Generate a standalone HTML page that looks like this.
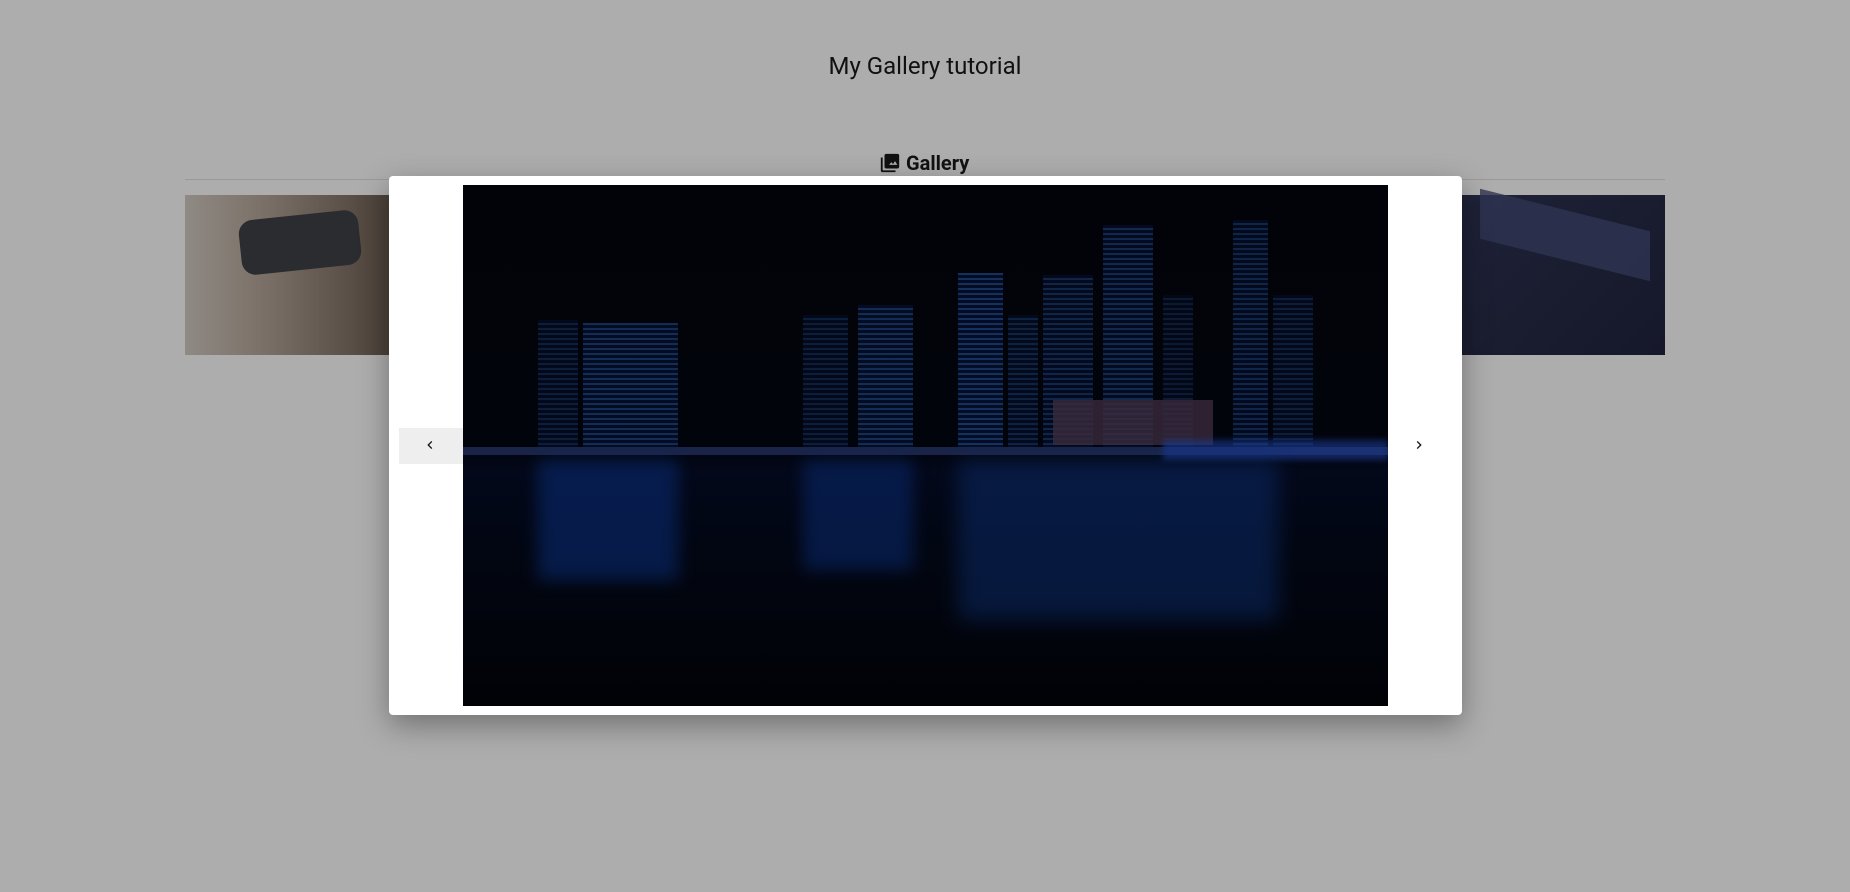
<!DOCTYPE html>
<html><head><style>
body{margin:0;width:1850px;height:892px;background:#adadad;font-family:Roboto,"Liberation Sans",sans-serif;position:relative;overflow:hidden}
.a{position:absolute}
.b{position:absolute;background:repeating-linear-gradient(0deg,rgba(60,140,255,.55) 0 2px,rgba(5,20,60,.9) 2px 5px)}
</style></head><body>
<div class="a" style="left:0;top:52px;width:1850px;text-align:center;font-size:24px;color:#111">My Gallery tutorial</div>
<div class="a" style="left:879px;top:152px;width:22px;height:22px">
<svg width="22" height="22" viewBox="0 0 24 24"><path d="M20 2H8a2 2 0 0 0-2 2v12a2 2 0 0 0 2 2h12a2 2 0 0 0 2-2V4a2 2 0 0 0-2-2zm-9 12 2.5-3 1.75 2.25L17.5 10 20 14H11zM2 6v14a2 2 0 0 0 2 2h14v-2H4V6H2z" fill="#111"/></svg></div>
<div class="a" style="left:906px;top:151px;font-size:20px;font-weight:bold;color:#111">Gallery</div>
<div class="a" style="left:185px;top:179px;width:1480px;height:1px;background:#999"></div>
<div class="a" style="left:185px;top:195px;width:204px;height:160px;background:linear-gradient(90deg,#8f8a84,#7a6f66 40%,#4a4038)"></div>
<div class="a" style="left:240px;top:215px;width:120px;height:55px;background:#2a2c30;border-radius:14px;transform:rotate(-6deg)"></div>
<div class="a" style="left:1462px;top:195px;width:203px;height:160px;background:linear-gradient(135deg,#1f2238,#1a1d30 50%,#15182a)"></div>
<div class="a" style="left:1480px;top:210px;width:170px;height:50px;background:#2e3552;transform:skewY(14deg);opacity:.8"></div>
<div class="a" style="left:389px;top:176px;width:1073px;height:539px;background:#fff;border-radius:4px;box-shadow:0 10px 30px rgba(0,0,0,.35)"></div>
<div class="a" style="left:399px;top:428px;width:64px;height:36px;background:#eee"></div>
<svg class="a" style="left:422px;top:437px" width="16" height="16" viewBox="0 0 24 24"><path d="M15.4 7.4 14 6l-6 6 6 6 1.4-1.4L10.8 12z" fill="#111"/></svg>
<svg class="a" style="left:1411px;top:437px" width="16" height="16" viewBox="0 0 24 24"><path d="M8.6 7.4 10 6l6 6-6 6-1.4-1.4L13.2 12z" fill="#111"/></svg>
<div class="a" style="left:463px;top:185px;width:925px;height:521px;background:linear-gradient(180deg,#020308 0%,#02040c 50%,#03081a 55%,#020612 70%,#010206 100%);overflow:hidden">
<div class="b" style="left:75px;top:135px;width:40px;height:130px;opacity:.35"></div>
<div class="b" style="left:120px;top:138px;width:95px;height:127px;opacity:.55"></div>
<div class="b" style="left:340px;top:130px;width:45px;height:135px;opacity:.35"></div>
<div class="b" style="left:395px;top:120px;width:55px;height:145px;opacity:.55"></div>
<div class="b" style="left:495px;top:88px;width:45px;height:177px;opacity:.6"></div>
<div class="b" style="left:545px;top:130px;width:30px;height:135px;opacity:.4"></div>
<div class="b" style="left:580px;top:90px;width:50px;height:175px;opacity:.45"></div>
<div class="b" style="left:640px;top:40px;width:50px;height:225px;opacity:.5"></div>
<div class="b" style="left:700px;top:110px;width:30px;height:155px;opacity:.3"></div>
<div class="b" style="left:770px;top:35px;width:35px;height:230px;opacity:.45"></div>
<div class="b" style="left:810px;top:110px;width:40px;height:155px;opacity:.35"></div>
<div class="a" style="left:590px;top:215px;width:160px;height:45px;background:#3a2a3c;opacity:.8"></div>
<div class="a" style="left:0;top:262px;width:925px;height:8px;background:#1a2448"></div>
<div class="a" style="left:700px;top:255px;width:225px;height:20px;background:#1a3a90;opacity:.6;filter:blur(3px)"></div>
<div class="a" style="left:75px;top:275px;width:140px;height:120px;background:#0a3080;opacity:.5;filter:blur(8px)"></div>
<div class="a" style="left:340px;top:275px;width:110px;height:110px;background:#0a3080;opacity:.45;filter:blur(8px)"></div>
<div class="a" style="left:495px;top:275px;width:320px;height:160px;background:#0d3580;opacity:.4;filter:blur(10px)"></div>
</div>
</body></html>
